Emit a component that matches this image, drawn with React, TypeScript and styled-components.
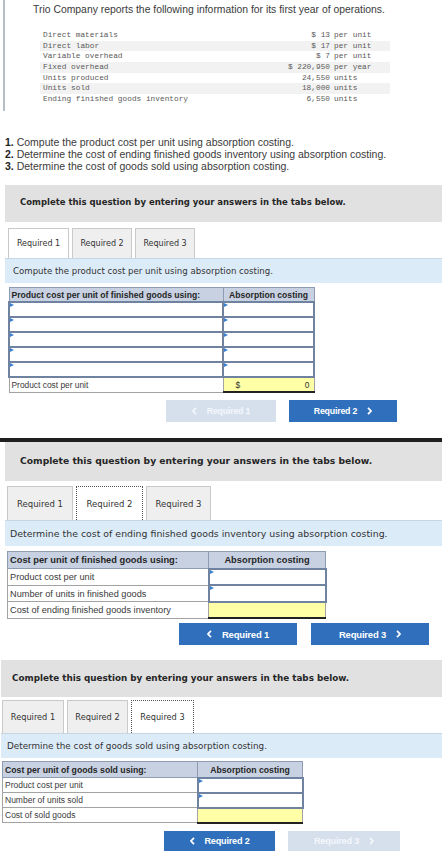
import React from 'react';
import styled, { createGlobalStyle } from 'styled-components';

const GlobalStyle = createGlobalStyle`
  html, body { margin: 0; padding: 0; background: #fff; }
  body { width: 442px; overflow: hidden; }
  * { box-sizing: border-box; }
`;

const Page = styled.div`
  width: 442px;
  background: #fff;
`;

const Intro = styled.div`
  margin-left: 3px;
  border-left: 2px solid #b9bdc6;
  padding: 4px 0 6px 28px;
`;

const Title = styled.p`
  margin: 0;
  font: 10.4px/12px "Liberation Sans", Arial, sans-serif;
  color: #3a3a3a;
  white-space: nowrap;
`;

const DataGrid = styled.div`
  margin: 14px 0 0 7px;
  width: 350px;
  font: 7.8px/10.7px "Liberation Mono", "DejaVu Sans Mono", monospace;
  color: #5a5a5a;
`;

const DataRow = styled.div<{ $striped: boolean }>`
  display: grid;
  grid-template-columns: 227px 56px 59px;
  column-gap: 4px;
  height: 10.7px;
  padding-left: 3px;
  background: ${(p) => (p.$striped ? '#f2f2f2' : 'transparent')};
  white-space: pre;
`;

const DataValue = styled.span`
  text-align: right;
`;

const Tasks = styled.ol`
  list-style: none;
  margin: 25px 0 0;
  padding: 0 0 0 5px;
  font: 10.5px/12px "Liberation Sans", Arial, sans-serif;
  color: #3a3a3a;
  white-space: nowrap;
`;

const TaskNum = styled.b`
  color: #222;
`;

type Cfg = {
  pl: number;
  mt: number;
  bannerH: number;
  bannerFs: number;
  bannerPl: number;
  tabsMt: number;
  tabsH: number;
  tabsMl: number;
  tabW: number[];
  tabGap: number;
  tabFs: number;
  active: number;
  dotted: boolean;
  stripH: number;
  stripFs: number;
  stripPl: number;
  tableMt: number;
  tableMl: number;
  cols: [number, number];
  headH: number;
  rowH: number;
  headFs: number;
  labelFs: number;
  navMt: number;
  navH: number;
  navW: [number, number];
  navGap: number;
  navPr: number;
  navFs: number;
};

const Section = styled.section<{ $pl: number; $mt: number }>`
  padding-left: ${(p) => p.$pl}px;
  margin-top: ${(p) => p.$mt}px;
`;

const Banner = styled.div<{ $h: number; $fs: number; $pl: number }>`
  height: ${(p) => p.$h}px;
  background: #e1e1e1;
  display: flex;
  align-items: center;
  padding: 0 0 2px ${(p) => p.$pl}px;
  font: bold ${(p) => p.$fs}px "DejaVu Sans", Verdana, sans-serif;
  color: #262626;
  white-space: nowrap;
`;

const TabBar = styled.div<{ $mt: number; $h: number; $ml: number; $gap: number }>`
  display: flex;
  gap: ${(p) => p.$gap}px;
  margin-top: ${(p) => p.$mt}px;
  padding-left: ${(p) => p.$ml}px;
  height: ${(p) => p.$h}px;
`;

const Tab = styled.div<{ $w: number; $fs: number; $active: boolean; $dotted: boolean }>`
  width: ${(p) => p.$w}px;
  height: 100%;
  display: flex;
  align-items: center;
  justify-content: center;
  font: ${(p) => p.$fs}px "DejaVu Sans", Verdana, sans-serif;
  color: #333;
  background: ${(p) => (p.$active ? '#fff' : '#efefef')};
  border: 1px ${(p) => (p.$active && p.$dotted ? 'dotted #555' : 'solid #c9c9c9')};
  border-bottom: none;
  white-space: nowrap;
`;

const Strip = styled.div<{ $h: number; $fs: number; $pl: number }>`
  height: ${(p) => p.$h}px;
  background: #dcebf8;
  border-top: 1px solid #c8d6e4;
  display: flex;
  align-items: center;
  padding-left: ${(p) => p.$pl}px;
  font: ${(p) => p.$fs}px "DejaVu Sans", Verdana, sans-serif;
  color: #333;
  white-space: nowrap;
`;

const Grid = styled.table<{ $mt: number; $ml: number }>`
  border-collapse: collapse;
  table-layout: fixed;
  margin-top: ${(p) => p.$mt}px;
  margin-left: ${(p) => p.$ml}px;
`;

const HeadCell = styled.th<{ $w: number; $h: number; $fs: number; $center?: boolean }>`
  width: ${(p) => p.$w}px;
  height: ${(p) => p.$h}px;
  padding: 0 2px;
  background: #c7d1e2;
  border: 1px solid #8d9bb3;
  font: bold ${(p) => p.$fs}px "Liberation Sans", Arial, sans-serif;
  color: #262626;
  text-align: ${(p) => (p.$center ? 'center' : 'left')};
  white-space: nowrap;
  overflow: hidden;
`;

const LabelCell = styled.td<{ $h: number; $fs: number }>`
  height: ${(p) => p.$h}px;
  padding: 0 2px;
  background: #fff;
  border: 1px solid #a3a3a3;
  font: ${(p) => p.$fs}px "Liberation Sans", Arial, sans-serif;
  color: #3a3a3a;
  white-space: nowrap;
`;

const InputCell = styled.td<{ $h: number }>`
  height: ${(p) => p.$h}px;
  padding: 0;
  background: #fff;
  border: 2px solid #6f82a0;
  position: relative;
  &::before {
    content: '';
    position: absolute;
    left: 0;
    top: 0;
    border-left: 4px solid #3b7fd0;
    border-top: 2px solid transparent;
    border-bottom: 2px solid transparent;
  }
`;

const TotalCell = styled.td<{ $h: number; $fs: number }>`
  height: ${(p) => p.$h}px;
  padding: 0 4px 0 12px;
  background: #ffffa6;
  border: 1px solid #a3a3a3;
  border-bottom: 2px solid #222;
  font: ${(p) => p.$fs}px "Liberation Sans", Arial, sans-serif;
  color: #333;
`;

const TotalInner = styled.div`
  display: flex;
  justify-content: space-between;
`;

const NavRow = styled.div<{ $mt: number; $pr: number; $gap: number }>`
  display: flex;
  justify-content: flex-end;
  gap: ${(p) => p.$gap}px;
  margin-top: ${(p) => p.$mt}px;
  padding-right: ${(p) => p.$pr}px;
`;

const NavButton = styled.button<{ $w: number; $h: number; $fs: number; $off: boolean }>`
  width: ${(p) => p.$w}px;
  height: ${(p) => p.$h}px;
  border: none;
  padding: 0;
  background: ${(p) => (p.$off ? '#d6e0ed' : '#2f6fbb')};
  color: ${(p) => (p.$off ? '#f4f7fb' : '#fff')};
  display: flex;
  align-items: center;
  justify-content: center;
  gap: 10px;
  font: bold ${(p) => p.$fs}px "Liberation Sans", Arial, sans-serif;
  letter-spacing: -0.2px;
`;

const Divider = styled.div`
  height: 4px;
  background: #1f1f1f;
  margin-top: 16px;
`;

const Chevron = ({ left }: { left?: boolean }) => (
  <svg width="5" height="8" viewBox="0 0 5 8" aria-hidden>
    <path
      d={left ? 'M4 0.8 L1 4 L4 7.2' : 'M1 0.8 L4 4 L1 7.2'}
      fill="none"
      stroke="currentColor"
      strokeWidth="1.7"
    />
  </svg>
);

const data: [string, string, string][] = [
  ['Direct materials', '$ 13', 'per unit'],
  ['Direct labor', '$ 17', 'per unit'],
  ['Variable overhead', '$ 7', 'per unit'],
  ['Fixed overhead', '$ 220,950', 'per year'],
  ['Units produced', '24,550', 'units'],
  ['Units sold', '18,000', 'units'],
  ['Ending finished goods inventory', '6,550', 'units'],
];

const tasks = [
  'Compute the product cost per unit using absorption costing.',
  'Determine the cost of ending finished goods inventory using absorption costing.',
  'Determine the cost of goods sold using absorption costing.',
];

const BANNER = 'Complete this question by entering your answers in the tabs below.';

type Row = { kind: 'input' } | { kind: 'label'; text: string } | { kind: 'total'; text: string; sum?: boolean };

const Part = ({
  cfg,
  instruction,
  header,
  rows,
  prev,
  next,
}: {
  cfg: Cfg;
  instruction: string;
  header: string;
  rows: Row[];
  prev: { label: string; off: boolean };
  next: { label: string; off: boolean };
}) => (
  <Section $pl={cfg.pl} $mt={cfg.mt}>
    <Banner $h={cfg.bannerH} $fs={cfg.bannerFs} $pl={cfg.bannerPl}>
      {BANNER}
    </Banner>
    <TabBar $mt={cfg.tabsMt} $h={cfg.tabsH} $ml={cfg.tabsMl} $gap={cfg.tabGap}>
      {cfg.tabW.map((w, i) => (
        <Tab key={i} $w={w} $fs={cfg.tabFs} $active={cfg.active === i} $dotted={cfg.dotted}>
          Required {i + 1}
        </Tab>
      ))}
    </TabBar>
    <Strip $h={cfg.stripH} $fs={cfg.stripFs} $pl={cfg.stripPl}>
      {instruction}
    </Strip>
    <Grid $mt={cfg.tableMt} $ml={cfg.tableMl}>
      <thead>
        <tr>
          <HeadCell $w={cfg.cols[0]} $h={cfg.headH} $fs={cfg.headFs}>
            {header}
          </HeadCell>
          <HeadCell $w={cfg.cols[1]} $h={cfg.headH} $fs={cfg.headFs} $center>
            Absorption costing
          </HeadCell>
        </tr>
      </thead>
      <tbody>
        {rows.map((r, i) => (
          <tr key={i}>
            {r.kind === 'input' ? (
              <InputCell $h={cfg.rowH} />
            ) : (
              <LabelCell $h={cfg.rowH} $fs={cfg.labelFs}>
                {r.text}
              </LabelCell>
            )}
            {r.kind === 'total' ? (
              <TotalCell $h={cfg.rowH} $fs={cfg.labelFs}>
                {r.sum && (
                  <TotalInner>
                    <span>$</span>
                    <span>0</span>
                  </TotalInner>
                )}
              </TotalCell>
            ) : (
              <InputCell $h={cfg.rowH} />
            )}
          </tr>
        ))}
      </tbody>
    </Grid>
    <NavRow $mt={cfg.navMt} $pr={cfg.navPr} $gap={cfg.navGap}>
      <NavButton $w={cfg.navW[0]} $h={cfg.navH} $fs={cfg.navFs} $off={prev.off}>
        <Chevron left />
        <span>{prev.label}</span>
      </NavButton>
      <NavButton $w={cfg.navW[1]} $h={cfg.navH} $fs={cfg.navFs} $off={next.off}>
        <span>{next.label}</span>
        <Chevron />
      </NavButton>
    </NavRow>
  </Section>
);

const s1: Cfg = {
  pl: 5, mt: 13, bannerH: 37, bannerFs: 8.5, bannerPl: 15,
  tabsMt: 6, tabsH: 30, tabsMl: 3, tabW: [61, 60, 60], tabGap: 3, tabFs: 8,
  active: 0, dotted: false,
  stripH: 25, stripFs: 8.6, stripPl: 8,
  tableMt: 4, tableMl: 3, cols: [214, 91], headH: 15, rowH: 15, headFs: 8.6, labelFs: 8.4,
  navMt: 7, navH: 22, navW: [110, 108], navGap: 13, navPr: 45, navFs: 8.8,
};

const s2: Cfg = {
  pl: 5, mt: 0, bannerH: 39, bannerFs: 9.2, bannerPl: 15,
  tabsMt: 5, tabsH: 34, tabsMl: 2, tabW: [66, 67, 65], tabGap: 3, tabFs: 8.5,
  active: 1, dotted: true,
  stripH: 26, stripFs: 9.4, stripPl: 5,
  tableMt: 5, tableMl: 2, cols: [201, 117], headH: 17, rowH: 16.5, headFs: 9.3, labelFs: 9.2,
  navMt: 4, navH: 22, navW: [118, 118], navGap: 14, navPr: 13, navFs: 9.5,
};

const s3: Cfg = {
  pl: 1, mt: 15, bannerH: 37, bannerFs: 8.8, bannerPl: 11,
  tabsMt: 3, tabsH: 33, tabsMl: 1, tabW: [62, 61, 63], tabGap: 3, tabFs: 8.2,
  active: 2, dotted: true,
  stripH: 25, stripFs: 8.8, stripPl: 6,
  tableMt: 3, tableMl: 1, cols: [195, 105], headH: 16, rowH: 15, headFs: 8.7, labelFs: 8.5,
  navMt: 7, navH: 20, navW: [111, 112], navGap: 13, navPr: 42, navFs: 9.1,
};

export default function App() {
  return (
    <Page>
      <GlobalStyle />
      <Intro>
        <Title>Trio Company reports the following information for its first year of operations.</Title>
        <DataGrid>
          {data.map(([label, value, unit], i) => (
            <DataRow key={label} $striped={i % 2 === 1}>
              <span>{label}</span>
              <DataValue>{value}</DataValue>
              <span>{unit}</span>
            </DataRow>
          ))}
        </DataGrid>
      </Intro>
      <Tasks>
        {tasks.map((t, i) => (
          <li key={i}>
            <TaskNum>{i + 1}.</TaskNum> {t}
          </li>
        ))}
      </Tasks>
      <Part
        cfg={s1}
        instruction="Compute the product cost per unit using absorption costing."
        header="Product cost per unit of finished goods using:"
        rows={[
          { kind: 'input' },
          { kind: 'input' },
          { kind: 'input' },
          { kind: 'input' },
          { kind: 'input' },
          { kind: 'total', text: 'Product cost per unit', sum: true },
        ]}
        prev={{ label: 'Required 1', off: true }}
        next={{ label: 'Required 2', off: false }}
      />
      <Divider />
      <Part
        cfg={s2}
        instruction="Determine the cost of ending finished goods inventory using absorption costing."
        header="Cost per unit of finished goods using:"
        rows={[
          { kind: 'label', text: 'Product cost per unit' },
          { kind: 'label', text: 'Number of units in finished goods' },
          { kind: 'total', text: 'Cost of ending finished goods inventory' },
        ]}
        prev={{ label: 'Required 1', off: false }}
        next={{ label: 'Required 3', off: false }}
      />
      <Part
        cfg={s3}
        instruction="Determine the cost of goods sold using absorption costing."
        header="Cost per unit of goods sold using:"
        rows={[
          { kind: 'label', text: 'Product cost per unit' },
          { kind: 'label', text: 'Number of units sold' },
          { kind: 'total', text: 'Cost of sold goods' },
        ]}
        prev={{ label: 'Required 2', off: false }}
        next={{ label: 'Required 3', off: true }}
      />
    </Page>
  );
}
